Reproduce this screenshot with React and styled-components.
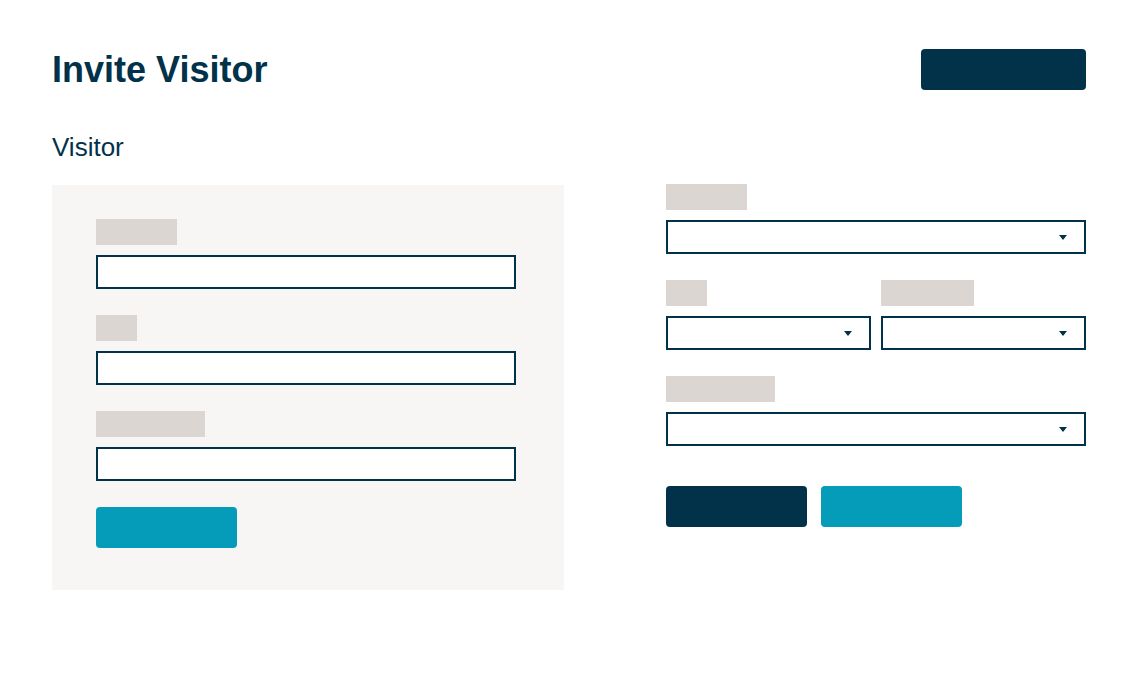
import React from 'react';
import styled, { createGlobalStyle } from 'styled-components';

const navy = '#01324a';
const teal = '#049cb8';
const skeleton = '#dbd6d2';

const GlobalStyle = createGlobalStyle`
  body {
    margin: 0;
    background: #fff;
    font-family: "Liberation Sans", Arial, sans-serif;
    color: ${navy};
  }
`;

const Page = styled.div`
  padding: 49px 41px 0 52px;
`;

const Header = styled.header`
  display: flex;
  justify-content: space-between;
  align-items: center;
  height: 41px;
`;

const Title = styled.h1`
  margin: 0;
  font-size: 36px;
  line-height: 41px;
  font-weight: 700;
`;

const Button = styled.button`
  display: block;
  border: none;
  border-radius: 4px;
  height: 41px;
  width: ${p => p.$width || 141}px;
  background: ${p => (p.$variant === 'teal' ? teal : navy)};
  padding: 0;
  cursor: pointer;
`;

const Subtitle = styled.h2`
  margin: 42px 0 0;
  font-size: 26px;
  line-height: 30px;
  font-weight: 400;
`;

const Columns = styled.div`
  display: flex;
  gap: 102px;
  margin-top: 23px;
  align-items: flex-start;
`;

const Panel = styled.section`
  width: 512px;
  box-sizing: border-box;
  background: #f7f6f4;
  padding: 34px 48px 42px 44px;
`;

const Side = styled.section`
  width: 420px;
  margin-top: -1px;
`;

const Field = styled.div`
  display: flex;
  flex-direction: column;
  flex: 1;
  min-width: 0;
  margin-bottom: 26px;
`;

const Label = styled.div`
  height: 26px;
  width: ${p => p.$width}px;
  background: ${skeleton};
  margin-bottom: 10px;
`;

const Input = styled.input`
  display: block;
  box-sizing: border-box;
  height: 34px;
  width: 100%;
  border: 2px solid ${navy};
  border-radius: 0;
  background: #fff;
  margin: 0;
  outline: none;
`;

const SelectBox = styled.div`
  box-sizing: border-box;
  height: 34px;
  width: 100%;
  border: 2px solid ${navy};
  background: #fff;
  display: flex;
  align-items: center;
  justify-content: flex-end;
  padding-right: 17px;
`;

const Caret = styled.span`
  width: 0;
  height: 0;
  border-left: 4px solid transparent;
  border-right: 4px solid transparent;
  border-top: 5px solid ${navy};
  margin-top: 1px;
`;

const Row = styled.div`
  display: flex;
  gap: 10px;
`;

const Actions = styled.div`
  display: flex;
  gap: 14px;
  padding-top: ${p => p.$top || 0}px;
`;

const Select = () => (
  <SelectBox>
    <Caret />
  </SelectBox>
);

export default function App() {
  return (
    <>
      <GlobalStyle />
      <Page>
        <Header>
          <Title>Invite Visitor</Title>
          <Button $width={165} />
        </Header>
        <Subtitle>Visitor</Subtitle>
        <Columns>
          <Panel>
            <Field>
              <Label $width={81} />
              <Input />
            </Field>
            <Field>
              <Label $width={41} />
              <Input />
            </Field>
            <Field>
              <Label $width={109} />
              <Input />
            </Field>
            <Button $variant="teal" />
          </Panel>
          <Side>
            <Field>
              <Label $width={81} />
              <Select />
            </Field>
            <Row>
              <Field>
                <Label $width={41} />
                <Select />
              </Field>
              <Field>
                <Label $width={93} />
                <Select />
              </Field>
            </Row>
            <Field>
              <Label $width={109} />
              <Select />
            </Field>
            <Actions $top={14}>
              <Button />
              <Button $variant="teal" />
            </Actions>
          </Side>
        </Columns>
      </Page>
    </>
  );
}
